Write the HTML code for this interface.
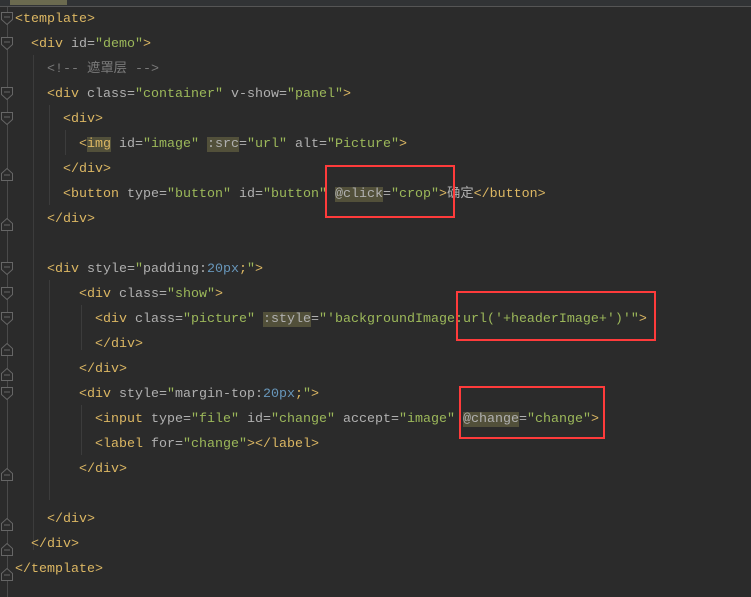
<!DOCTYPE html>
<html><head><meta charset="utf-8"><style>
body{margin:0;width:751px;height:597px;background:#2b2b2b;overflow:hidden;position:relative;font-family:"Liberation Mono","Noto Sans CJK SC",monospace;font-size:13.33px}
.top{position:absolute;left:0;top:0;width:751px;height:6px;background:#313335;border-bottom:1px solid #555}
.tab{position:absolute;left:10px;top:0;width:57px;height:5px;background:#6b6a4f}
.gut{position:absolute;left:7px;top:7px;width:1px;height:590px;background:#4a4a4a}
.w{position:absolute;left:0;top:2px}
.l{position:absolute;height:18px;line-height:18px;white-space:pre;color:#b0b0b0}
.t{color:#dcb763}.s{color:#9cb85a}.c{color:#7a7a7a}.n{color:#6897bb}.h{background:#52503a}
.g{position:absolute;width:1px;background:#3c3c3c}
.r{position:absolute;border:2px solid #ff3b3b;box-sizing:border-box}
</style></head><body>
<div class="top"><div class="tab"></div></div>
<div class="gut"></div>
<div class="g" style="left:33px;top:55px;height:495px"></div>
<div class="g" style="left:49px;top:105px;height:100px"></div>
<div class="g" style="left:65px;top:130px;height:25px"></div>
<div class="g" style="left:49px;top:280px;height:220px"></div>
<div class="g" style="left:81px;top:305px;height:45px"></div>
<div class="g" style="left:81px;top:405px;height:50px"></div>
<svg style="position:absolute;left:0;top:0" width="16" height="597">
<g fill="#2b2b2b" stroke="#666" stroke-width="1">
<path d="M1.5 12.5h11v7l-5.5 5-5.5-5z"/><path d="M4 17h6"/>
<path d="M1.5 37.5h11v7l-5.5 5-5.5-5z"/><path d="M4 42h6"/>
<path d="M1.5 87.5h11v7l-5.5 5-5.5-5z"/><path d="M4 92h6"/>
<path d="M1.5 112.5h11v7l-5.5 5-5.5-5z"/><path d="M4 117h6"/>
<path d="M1.5 173.5l5.5-5 5.5 5v7h-11z"/><path d="M4 175h6"/>
<path d="M1.5 223.5l5.5-5 5.5 5v7h-11z"/><path d="M4 225h6"/>
<path d="M1.5 262.5h11v7l-5.5 5-5.5-5z"/><path d="M4 267h6"/>
<path d="M1.5 287.5h11v7l-5.5 5-5.5-5z"/><path d="M4 292h6"/>
<path d="M1.5 312.5h11v7l-5.5 5-5.5-5z"/><path d="M4 317h6"/>
<path d="M1.5 348.5l5.5-5 5.5 5v7h-11z"/><path d="M4 350h6"/>
<path d="M1.5 373.5l5.5-5 5.5 5v7h-11z"/><path d="M4 375h6"/>
<path d="M1.5 387.5h11v7l-5.5 5-5.5-5z"/><path d="M4 392h6"/>
<path d="M1.5 473.5l5.5-5 5.5 5v7h-11z"/><path d="M4 475h6"/>
<path d="M1.5 523.5l5.5-5 5.5 5v7h-11z"/><path d="M4 525h6"/>
<path d="M1.5 548.5l5.5-5 5.5 5v7h-11z"/><path d="M4 550h6"/>
<path d="M1.5 573.5l5.5-5 5.5 5v7h-11z"/><path d="M4 575h6"/>
</g></svg>
<div class="w">
<div class="l" style="left:15px;top:9px"><span class="t">&lt;template&gt;</span></div>
<div class="l" style="left:31px;top:34px"><span class="t">&lt;div</span> id=<span class="s">"demo"</span><span class="t">&gt;</span></div>
<div class="l c" style="left:47px;top:59px">&lt;!-- 遮罩层 --&gt;</div>
<div class="l" style="left:47px;top:84px"><span class="t">&lt;div</span> class=<span class="s">"container"</span> v-show=<span class="s">"panel"</span><span class="t">&gt;</span></div>
<div class="l" style="left:63px;top:109px"><span class="t">&lt;div&gt;</span></div>
<div class="l" style="left:79px;top:134px"><span class="t">&lt;<span class="h">img</span></span> id=<span class="s">"image"</span> <span class="h">:src</span>=<span class="s">"url"</span> alt=<span class="s">"Picture"</span><span class="t">&gt;</span></div>
<div class="l" style="left:63px;top:159px"><span class="t">&lt;/div&gt;</span></div>
<div class="l" style="left:63px;top:184px"><span class="t">&lt;button</span> type=<span class="s">"button"</span> id=<span class="s">"button"</span> <span class="h">@click</span>=<span class="s">"crop"</span><span class="t">&gt;</span>确定<span class="t">&lt;/button&gt;</span></div>
<div class="l" style="left:47px;top:209px"><span class="t">&lt;/div&gt;</span></div>
<div class="l" style="left:47px;top:259px"><span class="t">&lt;div</span> style=<span class="s">"</span>padding:<span class="n">20px</span><span class="t">;</span><span class="s">"</span><span class="t">&gt;</span></div>
<div class="l" style="left:79px;top:284px"><span class="t">&lt;div</span> class=<span class="s">"show"</span><span class="t">&gt;</span></div>
<div class="l" style="left:95px;top:309px"><span class="t">&lt;div</span> class=<span class="s">"picture"</span> <span class="h">:style</span>=<span class="s">"'backgroundImage:url('+headerImage+')'"</span><span class="t">&gt;</span></div>
<div class="l" style="left:95px;top:334px"><span class="t">&lt;/div&gt;</span></div>
<div class="l" style="left:79px;top:359px"><span class="t">&lt;/div&gt;</span></div>
<div class="l" style="left:79px;top:384px"><span class="t">&lt;div</span> style=<span class="s">"</span>margin-top:<span class="n">20px</span><span class="t">;</span><span class="s">"</span><span class="t">&gt;</span></div>
<div class="l" style="left:95px;top:409px"><span class="t">&lt;input</span> type=<span class="s">"file"</span> id=<span class="s">"change"</span> accept=<span class="s">"image"</span> <span class="h">@change</span>=<span class="s">"change"</span><span class="t">&gt;</span></div>
<div class="l" style="left:95px;top:434px"><span class="t">&lt;label</span> for=<span class="s">"change"</span><span class="t">&gt;&lt;/label&gt;</span></div>
<div class="l" style="left:79px;top:459px"><span class="t">&lt;/div&gt;</span></div>
<div class="l" style="left:47px;top:509px"><span class="t">&lt;/div&gt;</span></div>
<div class="l" style="left:31px;top:534px"><span class="t">&lt;/div&gt;</span></div>
<div class="l" style="left:15px;top:559px"><span class="t">&lt;/template&gt;</span></div>
</div>
<div class="r" style="left:325px;top:165px;width:130px;height:53px"></div>
<div class="r" style="left:456px;top:291px;width:200px;height:50px"></div>
<div class="r" style="left:459px;top:386px;width:146px;height:53px"></div>
</body></html>
